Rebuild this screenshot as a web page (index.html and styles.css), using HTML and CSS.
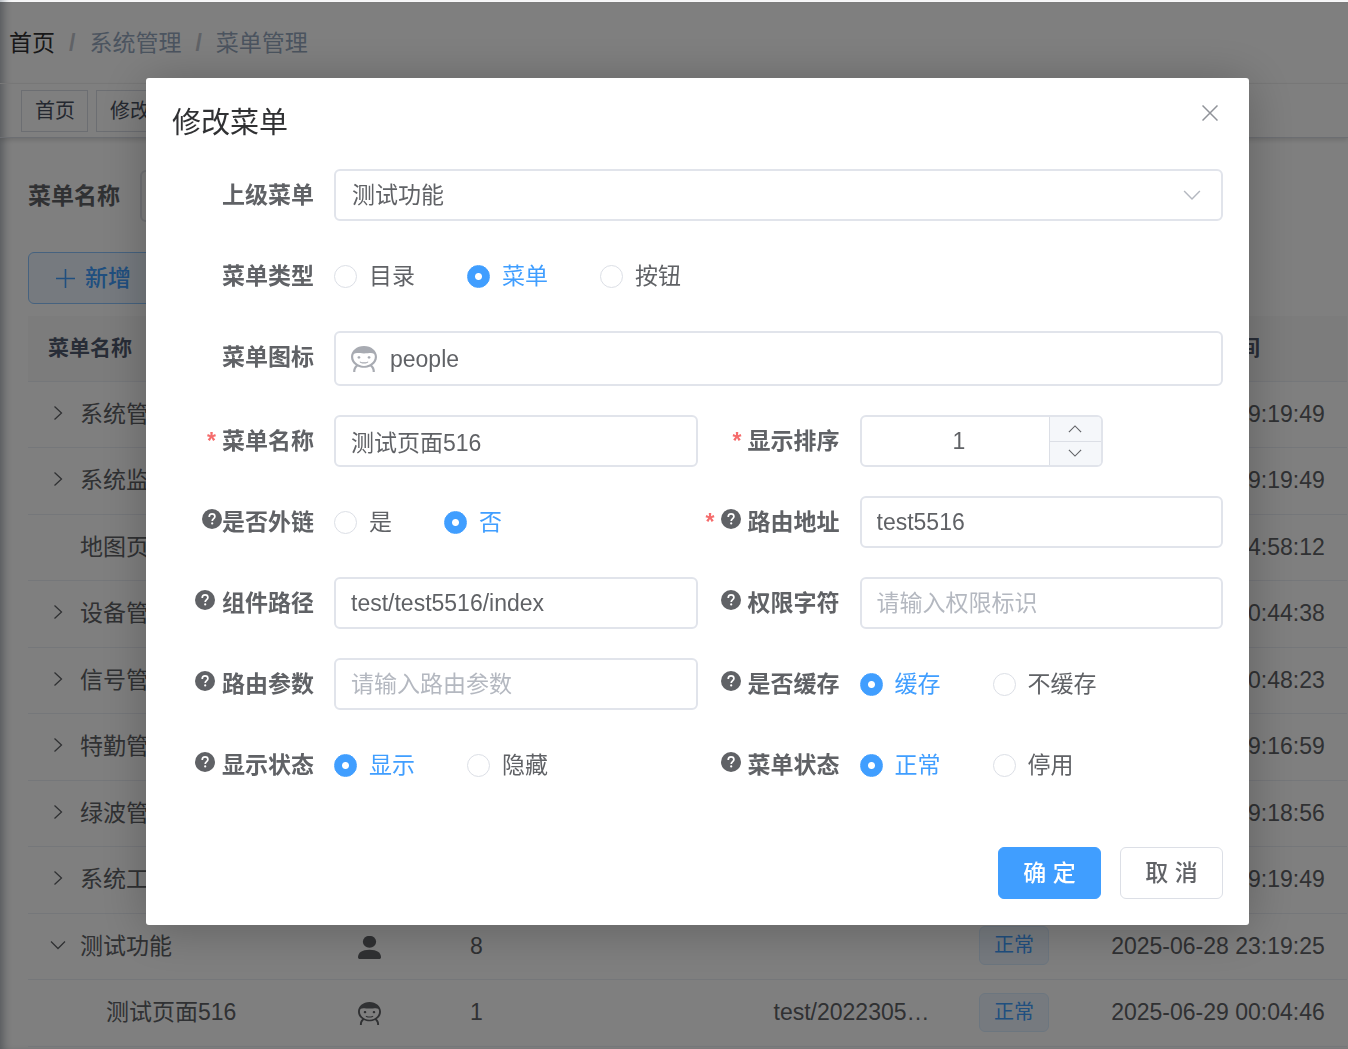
FILE: index.html
```html
<!DOCTYPE html>
<html lang="zh-CN">
<head>
<meta charset="utf-8">
<meta name="viewport" content="width=device-width, initial-scale=1">
<title>菜单管理</title>
<link rel="stylesheet" href="styles.css">
</head>
<body>
<svg class="sprite" aria-hidden="true">
  <symbol id="people" viewBox="0 0 128 128"><path d="M104.185 95.254c8.161 7.574 13.145 17.441 13.145 28.28 0 1.508-.098 2.998-.285 4.466h-10.784c.238-1.465.403-2.948.403-4.465 0-8.983-4.36-17.115-11.419-23.216C86 104.66 75.355 107.162 64 107.162c-11.344 0-21.98-2.495-31.22-6.83-7.064 6.099-11.444 14.218-11.444 23.203 0 1.517.165 3 .403 4.465H10.955a35.444 35.444 0 0 1-.285-4.465c0-10.838 4.974-20.713 13.127-28.291C9.294 85.42.003 70.417.003 53.58.003 23.99 28.656.001 64 .001s63.997 23.988 63.997 53.58c0 16.842-9.299 31.85-23.812 41.673zM64 36.867c-29.454 0-53.33-10.077-53.33 15.342 0 25.418 23.876 46.023 53.33 46.023 29.454 0 53.33-20.605 53.33-46.023 0-25.419-23.876-15.342-53.33-15.342zm24.888 25.644c-3.927 0-7.111-2.665-7.111-5.953 0-3.288 3.184-5.954 7.11-5.954 3.928 0 7.111 2.666 7.111 5.954s-3.183 5.953-7.11 5.953zm-3.556 16.372c0 4.11-9.55 7.442-21.332 7.442-11.781 0-21.332-3.332-21.332-7.442 0-1.06.656-2.064 1.8-2.976 3.295 2.626 10.79 4.465 19.532 4.465 8.743 0 16.237-1.84 19.531-4.465 1.145.912 1.801 1.916 1.801 2.976zm-46.22-16.372c-3.927 0-7.11-2.665-7.11-5.953 0-3.288 3.183-5.954 7.11-5.954 3.927 0 7.111 2.666 7.111 5.954s-3.184 5.953-7.11 5.953z"/></symbol>
  <symbol id="user" viewBox="0 0 128 128"><ellipse cx="64" cy="32" rx="37" ry="33"/><path d="M0 118C0 92 22 76 64 76s64 16 64 42c0 7-4 10-11 10H11c-7 0-11-3-11-10z"/></symbol>
  <symbol id="right" viewBox="0 0 16 16"><path d="M4.500 1.500 11.500 8l-7 6.500" fill="none" stroke="currentColor" stroke-width="1.300"/></symbol>
  <symbol id="down" viewBox="0 0 16 16"><path d="M1 4.500 8 11.500l7-7" fill="none" stroke="currentColor" stroke-width="1.300"/></symbol>
  <symbol id="up" viewBox="0 0 16 16"><path d="M1 11.500 8 4.500l7 7" fill="none" stroke="currentColor" stroke-width="1.300"/></symbol>
  <symbol id="close" viewBox="0 0 16 16"><path d="M.5.5l15 15M15.500.5l-15 15" fill="none" stroke="currentColor" stroke-width="1.500"/></symbol>
  <symbol id="plus" viewBox="0 0 18 18"><path d="M9 0v18M0 9h18" fill="none" stroke="currentColor" stroke-width="1.500"/></symbol>
  <symbol id="help" viewBox="0 0 20 20"><circle cx="10" cy="10" r="10"/><path d="M7.200 7.900c0-1.900 1.200-3 2.900-3s2.800 1 2.800 2.500c0 2.100-2.700 2.200-2.700 4.600" fill="none" stroke="#fff" stroke-width="1.700"/><circle cx="10.200" cy="14.400" r="1.100" fill="#fff"/></symbol>
</svg>

<div class="app">
  <header class="navbar">
    <nav class="breadcrumb" aria-label="breadcrumb">
      <a class="crumb crumb-home" href="#">首页</a><span class="slash">/</span><a class="crumb" href="#">系统管理</a><span class="slash">/</span><a class="crumb" href="#">菜单管理</a>
    </nav>
  </header>
  <nav class="tags"><a class="tag-link" href="#">首页</a><a class="tag-link" href="#">修改菜单</a></nav>
  <main class="content">
    <div class="search">
      <label class="search-label" for="q">菜单名称</label>
      <input class="input search-input" id="q" type="text">
    </div>
    <button class="btn btn-add" type="button"><svg class="icon-plus"><use href="#plus"/></svg>新增</button>
    <table class="grid">
      <colgroup><col class="c-name"><col class="c-icon"><col class="c-order"><col><col><col class="c-status"><col class="c-time"></colgroup>
      <thead><tr><th>菜单名称</th><th class="mid">图标</th><th>排序</th><th>权限标识</th><th>组件路径</th><th>状态</th><th class="mid">创建时间</th></tr></thead>
      <tbody>
        <tr><td><div class="cell"><svg class="arrow"><use href="#right"/></svg>系统管理</div></td><td></td><td></td><td></td><td></td><td></td><td class="mid">2025-04-20 09:19:49</td></tr>
        <tr><td><div class="cell"><svg class="arrow"><use href="#right"/></svg>系统监控</div></td><td></td><td></td><td></td><td></td><td></td><td class="mid">2025-04-20 09:19:49</td></tr>
        <tr><td><div class="cell"><span class="arrow"></span>地图页面</div></td><td></td><td></td><td></td><td></td><td></td><td class="mid">2025-05-26 14:58:12</td></tr>
        <tr><td><div class="cell"><svg class="arrow"><use href="#right"/></svg>设备管理</div></td><td></td><td></td><td></td><td></td><td></td><td class="mid">2025-05-06 20:44:38</td></tr>
        <tr><td><div class="cell"><svg class="arrow"><use href="#right"/></svg>信号管理</div></td><td></td><td></td><td></td><td></td><td></td><td class="mid">2025-05-06 20:48:23</td></tr>
        <tr><td><div class="cell"><svg class="arrow"><use href="#right"/></svg>特勤管理</div></td><td></td><td></td><td></td><td></td><td></td><td class="mid">2025-05-08 09:16:59</td></tr>
        <tr><td><div class="cell"><svg class="arrow"><use href="#right"/></svg>绿波管理</div></td><td></td><td></td><td></td><td></td><td></td><td class="mid">2025-05-08 09:18:56</td></tr>
        <tr><td><div class="cell"><svg class="arrow"><use href="#right"/></svg>系统工具</div></td><td></td><td></td><td></td><td></td><td></td><td class="mid">2025-04-20 09:19:49</td></tr>
        <tr><td><div class="cell"><svg class="arrow"><use href="#down"/></svg>测试功能</div></td><td class="mid"><svg class="menu-icon"><use href="#user"/></svg></td><td>8</td><td></td><td></td><td><span class="status">正常</span></td><td class="mid">2025-06-28 23:19:25</td></tr>
        <tr><td><div class="cell child"><span class="arrow"></span>测试页面516</div></td><td class="mid"><svg class="menu-icon"><use href="#people"/></svg></td><td>1</td><td></td><td>test/2022305…</td><td><span class="status">正常</span></td><td class="mid">2025-06-29 00:04:46</td></tr>
      </tbody>
    </table>
  </main>
</div>

<div class="overlay">
  <section class="dialog" role="dialog" aria-modal="true" aria-labelledby="dlg-title">
    <header class="dialog-head">
      <h1 class="dialog-title" id="dlg-title">修改菜单</h1>
      <button class="close" type="button" aria-label="关闭"><svg class="icon-close"><use href="#close"/></svg></button>
    </header>
    <form class="form">
      <div class="item wide">
        <label class="label" for="parent">上级菜单</label>
        <div class="control select-wrap"><select class="input" id="parent"><option>测试功能</option></select><svg class="select-arrow"><use href="#down"/></svg></div>
      </div>
      <div class="item wide" role="radiogroup" aria-labelledby="l-type">
        <span class="label" id="l-type">菜单类型</span>
        <div class="control radios">
          <label class="radio"><input type="radio" name="type"><span>目录</span></label>
          <label class="radio"><input type="radio" name="type" checked><span>菜单</span></label>
          <label class="radio"><input type="radio" name="type"><span>按钮</span></label>
        </div>
      </div>
      <div class="item wide">
        <label class="label" for="icon">菜单图标</label>
        <div class="control input icon-input"><svg class="prefix"><use href="#people"/></svg><input class="bare" id="icon" type="text" value="people" readonly></div>
      </div>
      <div class="item">
        <label class="label" for="name"><span class="req">*</span>菜单名称</label>
        <div class="control"><input class="input" id="name" type="text" value="测试页面516"></div>
      </div>
      <div class="item">
        <label class="label" for="sort"><span class="req">*</span>显示排序</label>
        <div class="control">
          <div class="input number"><input class="bare number-value" id="sort" type="text" inputmode="numeric" value="1"><div class="steps"><button class="step" type="button" aria-label="增加"><svg class="icon-step"><use href="#up"/></svg></button><button class="step" type="button" aria-label="减少"><svg class="icon-step"><use href="#down"/></svg></button></div></div>
        </div>
      </div>
      <div class="item" role="radiogroup" aria-labelledby="l-frame">
        <span class="label" id="l-frame"><svg class="help tight"><use href="#help"/></svg>是否外链</span>
        <div class="control radios">
          <label class="radio"><input type="radio" name="frame"><span>是</span></label>
          <label class="radio"><input type="radio" name="frame" checked><span>否</span></label>
        </div>
      </div>
      <div class="item">
        <label class="label" for="path"><span class="req">*</span><svg class="help"><use href="#help"/></svg>路由地址</label>
        <div class="control"><input class="input" id="path" type="text" value="test5516"></div>
      </div>
      <div class="item">
        <label class="label" for="component"><svg class="help"><use href="#help"/></svg>组件路径</label>
        <div class="control"><input class="input" id="component" type="text" value="test/test5516/index"></div>
      </div>
      <div class="item">
        <label class="label" for="perms"><svg class="help"><use href="#help"/></svg>权限字符</label>
        <div class="control"><input class="input" id="perms" type="text" placeholder="请输入权限标识"></div>
      </div>
      <div class="item">
        <label class="label" for="query"><svg class="help"><use href="#help"/></svg>路由参数</label>
        <div class="control"><input class="input" id="query" type="text" placeholder="请输入路由参数"></div>
      </div>
      <div class="item" role="radiogroup" aria-labelledby="l-cache">
        <span class="label" id="l-cache"><svg class="help"><use href="#help"/></svg>是否缓存</span>
        <div class="control radios">
          <label class="radio"><input type="radio" name="cache" checked><span>缓存</span></label>
          <label class="radio"><input type="radio" name="cache"><span>不缓存</span></label>
        </div>
      </div>
      <div class="item" role="radiogroup" aria-labelledby="l-visible">
        <span class="label" id="l-visible"><svg class="help"><use href="#help"/></svg>显示状态</span>
        <div class="control radios">
          <label class="radio"><input type="radio" name="visible" checked><span>显示</span></label>
          <label class="radio"><input type="radio" name="visible"><span>隐藏</span></label>
        </div>
      </div>
      <div class="item" role="radiogroup" aria-labelledby="l-status">
        <span class="label" id="l-status"><svg class="help"><use href="#help"/></svg>菜单状态</span>
        <div class="control radios">
          <label class="radio"><input type="radio" name="status" checked><span>正常</span></label>
          <label class="radio"><input type="radio" name="status"><span>停用</span></label>
        </div>
      </div>
    </form>
    <footer class="dialog-foot">
      <button class="btn btn-primary" type="button">确 定</button>
      <button class="btn" type="button">取 消</button>
    </footer>
  </section>
</div>
</body>
</html>
```
FILE: styles.css
```css
* { box-sizing: border-box; }

body {
  margin: 0;
  background: #fff;
  color: #606266;
  font: 23px/34px "Liberation Sans", "Noto Sans CJK SC", sans-serif;
}

a { color: inherit; text-decoration: none; }
button, input, select { font: inherit; color: inherit; margin: 0; }
svg { fill: currentColor; flex: none; }
.sprite { display: none; }

/* Page behind the dialog */
.app {
  height: 100vh;
  padding-top: 2px;
  overflow: hidden;
  box-shadow: inset 8px 0 10px -5px rgba(0, 21, 41, .35);
}

.navbar {
  display: flex;
  align-items: center;
  height: 82px;
  padding-left: 9px;
  border-bottom: 1px solid #f4f4f4;
}
.breadcrumb { display: flex; }
.crumb { color: #97a8be; }
.crumb-home { color: #303133; }
.slash { margin: 0 14px; color: #c0c4cc; font-weight: bold; }

.tags {
  display: flex;
  align-items: center;
  gap: 8px;
  height: 54px;
  padding-left: 21px;
  border-bottom: 1px solid #d8dce5;
  box-shadow: 0 2px 5px rgba(0, 0, 0, .15);
}
.tag-link {
  padding: 0 12px 0 13px;
  border: 1px solid #d8dce5;
  color: #495060;
  font-size: 20px;
  line-height: 40px;
}

.content { padding: 32px 1px 0 28px; }
.search { display: flex; align-items: center; margin-bottom: 30px; }
.search-label { width: 112px; font-weight: bold; }
.search-input { max-width: 380px; }

.btn {
  display: inline-flex;
  align-items: center;
  justify-content: center;
  height: 52px;
  min-width: 103px;
  padding: 0 24px;
  border: 1px solid #dcdfe6;
  border-radius: 6px;
  background: #fff;
  font-weight: 500;
  white-space: pre;
}
.btn-primary { border-color: #409eff; background: #409eff; color: #fff; }
.btn-add {
  gap: 10px;
  padding: 0 27px;
  border-color: #8cc5ff;
  background: #ecf5ff;
  color: #409eff;
}
.icon-plus { width: 19px; height: 19px; }

.grid {
  width: 100%;
  margin-top: 12px;
  table-layout: fixed;
  border-collapse: separate;
  border-spacing: 0;
}
.c-name { width: 260px; }
.c-icon { width: 162px; }
.c-order { width: 98px; }
.c-status { width: 130px; }
.c-time { width: 258px; }
.grid th {
  height: 66px;
  padding: 0 20px 2px;
  border-bottom: 1px solid #ebeef5;
  background: #f8f8f9;
  color: #515a6e;
  font-size: 21px;
  text-align: left;
}
.grid td {
  height: 66px;
  padding: 0 20px 2px;
  border-bottom: 1px solid #ebeef5;
  white-space: nowrap;
}
.grid tr:nth-child(even) td { height: 67px; }
.grid .mid { text-align: center; }
.cell { display: flex; align-items: center; }
.child { padding-left: 26px; }
.arrow { width: 16px; height: 16px; margin: 0 14px 2px 2px; flex: none; }
.menu-icon { display: inline-block; width: 23px; height: 23px; vertical-align: middle; }
.status {
  display: inline-block;
  padding: 0 14px;
  border: 1px solid #d9ecff;
  border-radius: 6px;
  background: #ecf5ff;
  color: #409eff;
  font-size: 20px;
  line-height: 37px;
  vertical-align: middle;
}

/* Dialog */
.overlay {
  position: fixed;
  inset: 2px 0 0;
  padding: 76px 99px 40px 146px;
  overflow: auto;
  background: rgba(0, 0, 0, .5);
}
.dialog {
  padding: 27px 26px 26px;
  border-radius: 3px;
  background: #fff;
  box-shadow: 0 4px 48px rgba(0, 0, 0, .25);
}
.dialog-head {
  display: flex;
  align-items: flex-start;
  justify-content: space-between;
  margin-bottom: 28px;
}
.dialog-title {
  margin: 0;
  color: #303133;
  font-size: 29px;
  font-weight: 400;
  line-height: 36px;
}
.close {
  display: flex;
  padding: 0 5px;
  border: 0;
  background: none;
  color: #909399;
}
.icon-close { width: 16px; height: 16px; }

.form {
  display: grid;
  grid-template-columns: 1fr 1fr;
  row-gap: 29px;
}
.item { display: flex; align-items: flex-start; min-height: 52px; }
.wide { grid-column: 1 / -1; }
.label {
  display: flex;
  align-items: center;
  justify-content: flex-end;
  width: 162px;
  height: 52px;
  padding-right: 20px;
  flex: none;
  font-weight: bold;
  white-space: nowrap;
}
.req { margin-right: 6px; color: #f56c6c; }
.help { width: 20px; height: 20px; margin: 0 7px 6px 0; }
.tight { margin-right: 0; }
.control { flex: 1; min-width: 0; }

.input {
  display: block;
  width: 100%;
  height: 52px;
  padding: 0 15px;
  border: 2px solid #e1e4eb;
  border-radius: 6px;
  background: #fff;
  outline: 0;
}
.input::placeholder { color: #b4b8c0; opacity: 1; }
.bare { min-width: 0; flex: 1; padding: 0; border: 0; background: none; outline: 0; }

.select-wrap { display: grid; align-items: center; }
.select-wrap > * { grid-area: 1 / 1; }
.select-wrap .input { padding: 0 16px; appearance: none; }
.select-arrow {
  width: 18px;
  height: 18px;
  margin-right: 22px;
  justify-self: end;
  color: #b4b8c0;
  pointer-events: none;
}

.icon-input { display: flex; align-items: center; gap: 13px; height: 55px; }
.prefix { width: 26px; height: 26px; color: #a8abb2; }

.number { display: flex; width: 243px; padding: 0; overflow: hidden; }
.number-value { padding: 0 16px 0 24px; text-align: center; }
.steps { display: flex; flex-direction: column; width: 52px; border-left: 1px solid #dcdfe6; }
.step {
  display: flex;
  flex: 1;
  align-items: center;
  justify-content: center;
  padding: 0;
  border: 0;
  background: #f5f7fa;
}
.step + .step { border-top: 1px solid #dcdfe6; }
.icon-step { width: 14px; height: 14px; }

.radios { display: flex; align-items: center; gap: 52px; height: 52px; }
.radio { display: flex; align-items: center; gap: 12px; }
.radio input {
  width: 23px;
  height: 23px;
  border: 1px solid #dcdfe6;
  border-radius: 50%;
  appearance: none;
  background: #fff;
}
.radio input:checked {
  border-color: #409eff;
  background: radial-gradient(circle, #fff 3px, #409eff 4px);
}
.radio input:checked + span { color: #409eff; }

.dialog-foot {
  display: flex;
  justify-content: flex-end;
  gap: 19px;
  margin-top: 56px;
}
```
